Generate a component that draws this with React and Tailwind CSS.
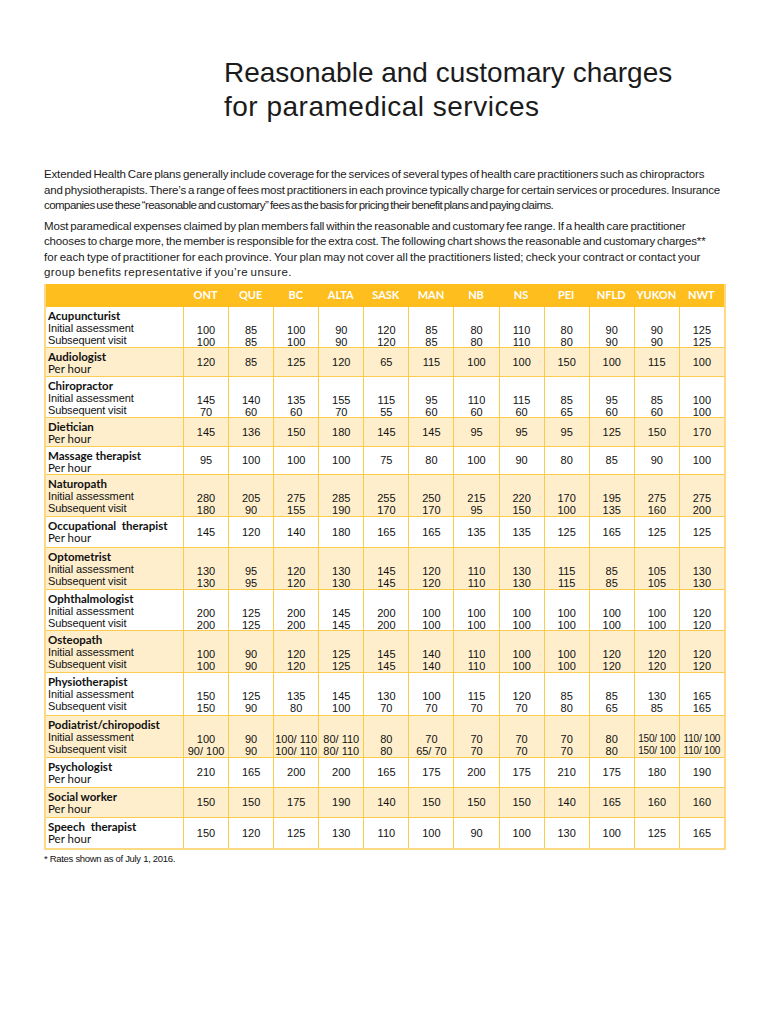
import React from "react";

const COLS = ["ONT", "QUE", "BC", "ALTA", "SASK", "MAN", "NB", "NS", "PEI", "NFLD", "YUKON", "NWT"];

const ROWS = [
  { name: "Acupuncturist", type: 3, h: "h-[41px]", a: ["100","85","100","90","120","85","80","110","80","90","90","125"], b: ["100","85","100","90","120","85","80","110","80","90","90","125"] },
  { name: "Audiologist", type: 2, h: "h-[29px]", a: ["120","85","125","120","65","115","100","100","150","100","115","100"] },
  { name: "Chiropractor", type: 3, h: "h-[41px]", a: ["145","140","135","155","115","95","110","115","85","95","85","100"], b: ["70","60","60","70","55","60","60","60","65","60","60","100"] },
  { name: "Dietician", type: 2, h: "h-[29px]", a: ["145","136","150","180","145","145","95","95","95","125","150","170"] },
  { name: "Massage therapist", type: 2, h: "h-[28px]", a: ["95","100","100","100","75","80","100","90","80","85","90","100"] },
  { name: "Naturopath", type: 3, h: "h-[42px]", a: ["280","205","275","285","255","250","215","220","170","195","275","275"], b: ["180","90","155","190","170","170","95","150","100","135","160","200"] },
  { name: "Occupational  therapist", type: 2, h: "h-[31px]", a: ["145","120","140","180","165","165","135","135","125","165","125","125"] },
  { name: "Optometrist", type: 3, h: "h-[42px]", a: ["130","95","120","130","145","120","110","130","115","85","105","130"], b: ["130","95","120","130","145","120","110","130","115","85","105","130"] },
  { name: "Ophthalmologist", type: 3, h: "h-[41px]", a: ["200","125","200","145","200","100","100","100","100","100","100","120"], b: ["200","125","200","145","200","100","100","100","100","100","100","120"] },
  { name: "Osteopath", type: 3, h: "h-[42px]", a: ["100","90","120","125","145","140","110","100","100","120","120","120"], b: ["100","90","120","125","145","140","110","100","100","120","120","120"] },
  { name: "Physiotherapist", type: 3, h: "h-[43px]", a: ["150","125","135","145","130","100","115","120","85","85","130","165"], b: ["150","90","80","100","70","70","70","70","80","65","85","165"] },
  { name: "Podiatrist/chiropodist", type: 3, h: "h-[42px]", a: ["100","90","100/ 110","80/ 110","80","70","70","70","70","80","150/ 100","110/ 100"], b: ["90/ 100","90","100/ 110","80/ 110","80","65/ 70","70","70","70","80","150/ 100","110/ 100"] },
  { name: "Psychologist", type: 2, h: "h-[30px]", a: ["210","165","200","200","165","175","200","175","210","175","180","190"] },
  { name: "Social worker", type: 2, h: "h-[30px]", a: ["150","150","175","190","140","150","150","150","140","165","160","160"] },
  { name: "Speech  therapist", type: 2, h: "h-[30px]", a: ["150","120","125","130","110","100","90","100","130","100","125","165"] },
];

const sans = "font-['Liberation_Sans',Arial,sans-serif]";
const lato = "font-['Lato','Open_Sans',sans-serif]";

function valClass(v, i) {
  return v.length > 6 && i >= 10 ? "text-[10px] tracking-[-0.2px]" : "text-[11px]";
}

function Row({ row, idx }) {
  const shaded = idx % 2 === 1;
  const bg = shaded ? "bg-[#FEEECC]" : "bg-white";
  return (
    <div className={`flex ${row.h} ${bg} border-b border-[#FBCB4C] last:border-b-0`}>
      <div className="w-[137px] shrink-0 pl-[2px] pt-[3px] leading-[12px] text-[#111]">
        <div className={`${lato} font-bold text-[11.5px] whitespace-pre`}>{row.name}</div>
        {row.type === 3 ? (
          <>
            <div className={`${sans} text-[11px] tracking-[-0.1px] whitespace-nowrap`}>Initial assessment</div>
            <div className={`${sans} text-[11px] tracking-[-0.15px] whitespace-nowrap`}>Subsequent visit</div>
          </>
        ) : (
          <div className={`${lato} text-[11.5px] whitespace-nowrap`}>Per hour</div>
        )}
      </div>
      {COLS.map((c, i) => (
        <div
          key={c}
          className={`flex-1 min-w-0 border-l border-[#FBCB4C] ${sans} text-[#111] text-center leading-[12px] ${
            row.type === 3 ? "pt-[17px]" : "flex items-center justify-center"
          }`}
        >
          {row.type === 3 ? (
            <>
              <div className={`${valClass(row.a[i], i)} whitespace-nowrap`}>{row.a[i]}</div>
              <div className={`${valClass(row.b[i], i)} whitespace-nowrap`}>{row.b[i]}</div>
            </>
          ) : (
            <div className="text-[11px] whitespace-nowrap">{row.a[i]}</div>
          )}
        </div>
      ))}
    </div>
  );
}

export default function App() {
  const para = `${sans} text-[11.5px] leading-[15.5px] [word-spacing:-1px] text-[#1a1a1a] whitespace-nowrap`;
  return (
    <div className="w-[770px] h-[1024px] bg-white overflow-hidden">
      <div className={`pl-[224px] pt-[56px] ${sans} text-[28px] leading-[34px] text-[#1b1b1b]`}>
        <div className="whitespace-nowrap">Reasonable and customary charges</div>
        <div className="whitespace-nowrap tracking-[0.5px]">for paramedical services</div>
      </div>

      <div className="pl-[44px] mt-[43px]">
        <div className={para}>
          <div className="tracking-[-0.15px]">Extended Health Care plans generally include coverage for the services of several types of health care practitioners such as chiropractors</div>
          <div className="tracking-[-0.2px]">and physiotherapists. There’s a range of fees most practitioners in each province typically charge for certain services or procedures. Insurance</div>
          <div className="tracking-[-0.56px]">companies use these “reasonable and customary” fees as the basis for pricing their benefit plans and paying claims.</div>
        </div>
        <div className={`${para} mt-[5px]`}>
          <div className="tracking-[-0.15px]">Most paramedical expenses claimed by plan members fall within the reasonable and customary fee range. If a health care practitioner</div>
          <div className="tracking-[-0.16px]">chooses to charge more, the member is responsible for the extra cost. The following chart shows the reasonable and customary charges**</div>
          <div className="tracking-[0.02px]">for each type of practitioner for each province. Your plan may not cover all the practitioners listed; check your contract or contact your</div>
          <div className="tracking-[0.4px]">group benefits representative if you’re unsure.</div>
        </div>
      </div>

      <div className="ml-[44px] mt-[3px] w-[682px] border-2 border-t-0 border-[#FDD985]">
        <div className="flex h-[23px] bg-[#FDBE1E]">
          <div className="w-[137px] shrink-0" />
          {COLS.map((c) => (
            <div key={c} className={`flex-1 min-w-0 flex items-center justify-center ${lato} font-bold text-[11px] text-white`}>
              {c}
            </div>
          ))}
        </div>
        {ROWS.map((r, i) => (
          <Row key={r.name} row={r} idx={i} />
        ))}
      </div>

      <div className={`pl-[44px] mt-[3px] ${sans} text-[9.5px] leading-[12px] tracking-[-0.3px] text-[#111]`}>
        * Rates shown as of July 1, 2016.
      </div>
    </div>
  );
}
